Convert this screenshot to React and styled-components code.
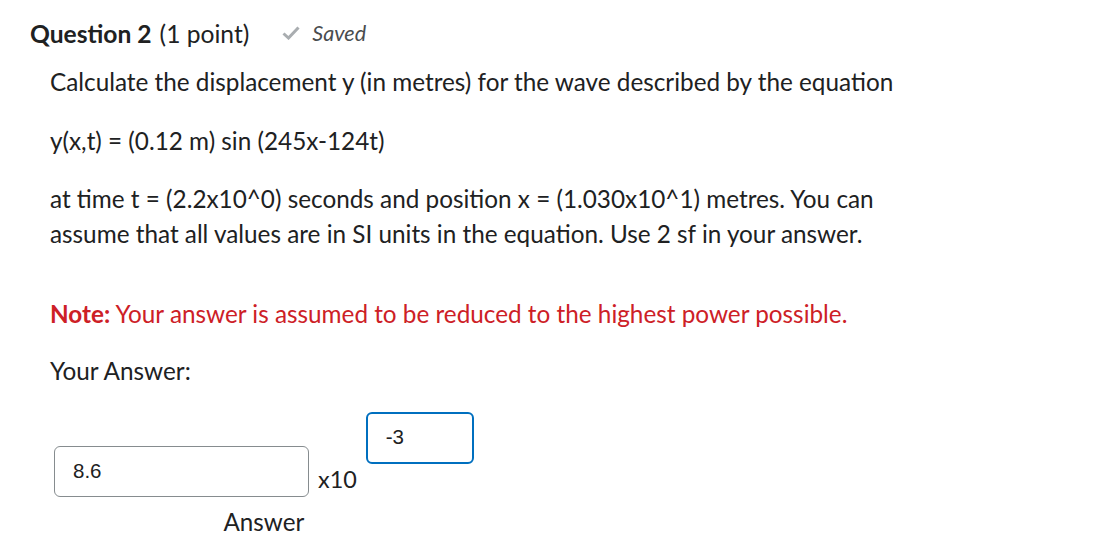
import React from "react";
import styled, { createGlobalStyle } from "styled-components";

const GlobalStyle = createGlobalStyle`
  body {
    margin: 0;
    padding: 0;
    background: #fff;
    font-family: Lato, "Noto Sans", sans-serif;
    color: #202122;
  }
`;

const Page = styled.div`
  padding: 18px 0 0 30px;
  width: 1070px;
`;

const Header = styled.div`
  display: flex;
  align-items: center;
  height: 30px;
`;

const Title = styled.span`
  font-size: 24.6px;
  font-weight: 700;
`;

const Points = styled.span`
  font-size: 24.6px;
  font-weight: 400;
  margin-left: 8px;
`;

const Saved = styled.span`
  display: flex;
  align-items: center;
  margin-left: 33px;
  font-size: 21.6px;
  font-style: italic;
  color: #494c4e;
  gap: 12px;
`;

const Body = styled.div`
  padding-left: 20px;
  font-size: 24.3px;
  line-height: 35px;
`;

const Para = styled.p`
  margin: ${(p) => p.$top || 0}px 0 0 0;
  max-width: 850px;
`;

const Note = styled.p`
  margin: 45px 0 0 0;
  color: #cd2026;
`;

const AnswerArea = styled.div`
  display: inline-flex;
  flex-direction: column;
  align-items: center;
  margin-top: 24px;
  margin-left: 4px;
`;

const Row = styled.div`
  display: flex;
  align-items: flex-start;
`;

const Field = styled.div`
  box-sizing: border-box;
  width: ${(p) => p.$w}px;
  height: ${(p) => p.$h}px;
  border: ${(p) => (p.$focus ? "2px solid #006fbf" : "1px solid #868c8f")};
  border-radius: 6px;
  padding-left: 18px;
  font-family: "Liberation Sans", Arial, sans-serif;
  font-size: 20.5px;
  display: flex;
  align-items: center;
  margin-top: ${(p) => p.$top || 0}px;
  padding-bottom: 3px;
  color: #202122;
`;

const Times = styled.span`
  font-size: 23.4px;
  margin: 54px 9px 0 9px;
  line-height: 26px;
`;

const Label = styled.div`
  font-size: 24.2px;
  margin-top: 10px;
  line-height: 30px;
`;

const Check = () => (
  <svg width="18" height="14" viewBox="0 0 18 14">
    <path d="M1.5 7.5 L6.5 12 L16.5 1.5" fill="none" stroke="#a9adb0" strokeWidth="3" />
  </svg>
);

export default function App() {
  return (
    <>
      <GlobalStyle />
      <Page>
        <Header>
          <Title>Question 2</Title>
          <Points>(1 point)</Points>
          <Saved>
            <Check />
            Saved
          </Saved>
        </Header>
        <Body>
          <Para $top={16}>
            Calculate the displacement y (in metres) for the wave described by the equation
          </Para>
          <Para $top={24}>y(x,t) = (0.12 m) sin (245x-124t)</Para>
          <Para $top={23}>
            at time t = (2.2x10^0) seconds and position x = (1.030x10^1) metres. You can
            assume that all values are in SI units in the equation. Use 2 sf in your answer.
          </Para>
          <Note>
            <b>Note:</b> Your answer is assumed to be reduced to the highest power possible.
          </Note>
          <Para $top={22}>Your Answer:</Para>
          <AnswerArea>
            <Row>
              <Field $w={255} $h={51} $top={34}>8.6</Field>
              <Times>x10</Times>
              <Field $w={108} $h={52} $focus>-3</Field>
            </Row>
            <Label>Answer</Label>
          </AnswerArea>
        </Body>
      </Page>
    </>
  );
}
